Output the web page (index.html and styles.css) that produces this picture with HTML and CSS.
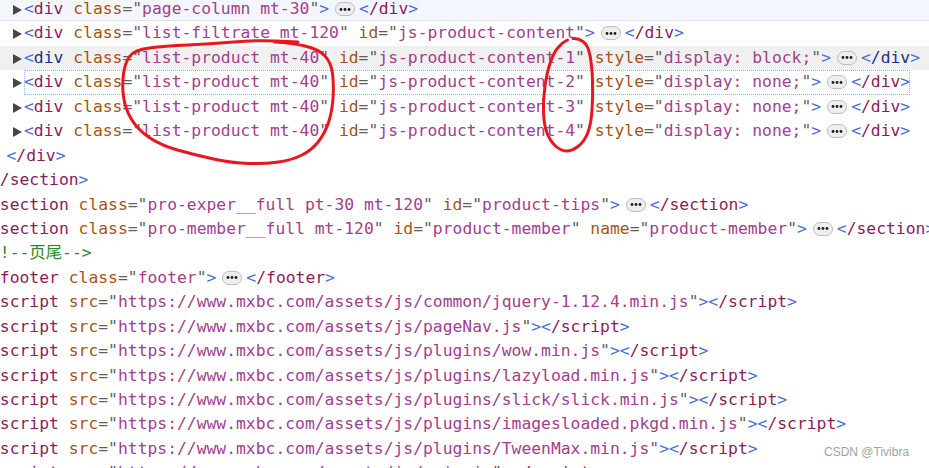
FILE: index.html
```html
<!DOCTYPE html>
<html lang="en">
<head>
<meta charset="utf-8">
<title>Elements</title>
<link rel="stylesheet" href="styles.css">
</head>
<body>
<div class="tree">
  <div class="r lv2 hov"><i class="tri"></i><span class="p">&lt;</span><span class="t">div</span> <span class="an">class</span><span class="eq">="</span><span class="av">page-column mt-30</span><span class="eq">"</span><span class="p">&gt;</span><span class="ell"><svg width="18" height="11" viewBox="0 0 18 11"><circle cx="5" cy="5.5" r="1.4"/><circle cx="9" cy="5.5" r="1.4"/><circle cx="13" cy="5.5" r="1.4"/></svg></span><span class="p">&lt;</span><span class="t">/div</span><span class="p">&gt;</span></div>
  <div class="r lv2"><i class="tri"></i><span class="p">&lt;</span><span class="t">div</span> <span class="an">class</span><span class="eq">="</span><span class="av">list-filtrate mt-120</span><span class="eq">"</span> <span class="an">id</span><span class="eq">="</span><span class="av">js-product-content</span><span class="eq">"</span><span class="p">&gt;</span><span class="ell"><svg width="18" height="11" viewBox="0 0 18 11"><circle cx="5" cy="5.5" r="1.4"/><circle cx="9" cy="5.5" r="1.4"/><circle cx="13" cy="5.5" r="1.4"/></svg></span><span class="p">&lt;</span><span class="t">/div</span><span class="p">&gt;</span></div>
  <div class="r lv2 sel"><i class="tri"></i><span class="p">&lt;</span><span class="t">div</span> <span class="an">class</span><span class="eq">="</span><span class="av">list-product mt-40</span><span class="eq">"</span> <span class="an">id</span><span class="eq">="</span><span class="av">js-product-content-1</span><span class="eq">"</span> <span class="an">style</span><span class="eq">="</span><span class="av">display: block;</span><span class="eq">"</span><span class="p">&gt;</span><span class="ell"><svg width="18" height="11" viewBox="0 0 18 11"><circle cx="5" cy="5.5" r="1.4"/><circle cx="9" cy="5.5" r="1.4"/><circle cx="13" cy="5.5" r="1.4"/></svg></span><span class="p">&lt;</span><span class="t">/div</span><span class="p">&gt;</span></div>
  <div class="r lv2"><i class="tri"></i><span class="focus"><span class="p">&lt;</span><span class="t">div</span> <span class="an">class</span><span class="eq">="</span><span class="av">list-product mt-40</span><span class="eq">"</span> <span class="an">id</span><span class="eq">="</span><span class="av">js-product-content-2</span><span class="eq">"</span> <span class="an">style</span><span class="eq">="</span><span class="av">display: none;</span><span class="eq">"</span><span class="p">&gt;</span><span class="ell"><svg width="18" height="11" viewBox="0 0 18 11"><circle cx="5" cy="5.5" r="1.4"/><circle cx="9" cy="5.5" r="1.4"/><circle cx="13" cy="5.5" r="1.4"/></svg></span><span class="p">&lt;</span><span class="t">/div</span><span class="p">&gt;</span></span></div>
  <div class="r lv2"><i class="tri"></i><span class="p">&lt;</span><span class="t">div</span> <span class="an">class</span><span class="eq">="</span><span class="av">list-product mt-40</span><span class="eq">"</span> <span class="an">id</span><span class="eq">="</span><span class="av">js-product-content-3</span><span class="eq">"</span> <span class="an">style</span><span class="eq">="</span><span class="av">display: none;</span><span class="eq">"</span><span class="p">&gt;</span><span class="ell"><svg width="18" height="11" viewBox="0 0 18 11"><circle cx="5" cy="5.5" r="1.4"/><circle cx="9" cy="5.5" r="1.4"/><circle cx="13" cy="5.5" r="1.4"/></svg></span><span class="p">&lt;</span><span class="t">/div</span><span class="p">&gt;</span></div>
  <div class="r lv2"><i class="tri"></i><span class="p">&lt;</span><span class="t">div</span> <span class="an">class</span><span class="eq">="</span><span class="av">list-product mt-40</span><span class="eq">"</span> <span class="an">id</span><span class="eq">="</span><span class="av">js-product-content-4</span><span class="eq">"</span> <span class="an">style</span><span class="eq">="</span><span class="av">display: none;</span><span class="eq">"</span><span class="p">&gt;</span><span class="ell"><svg width="18" height="11" viewBox="0 0 18 11"><circle cx="5" cy="5.5" r="1.4"/><circle cx="9" cy="5.5" r="1.4"/><circle cx="13" cy="5.5" r="1.4"/></svg></span><span class="p">&lt;</span><span class="t">/div</span><span class="p">&gt;</span></div>
  <div class="r lv1"><span class="p">&lt;</span><span class="t">/div</span><span class="p">&gt;</span></div>
  <div class="r lv0"><span class="p">&lt;</span><span class="t">/section</span><span class="p">&gt;</span></div>
  <div class="r lv0"><span class="p">&lt;</span><span class="t">section</span> <span class="an">class</span><span class="eq">="</span><span class="av">pro-exper__full pt-30 mt-120</span><span class="eq">"</span> <span class="an">id</span><span class="eq">="</span><span class="av">product-tips</span><span class="eq">"</span><span class="p">&gt;</span><span class="ell"><svg width="18" height="11" viewBox="0 0 18 11"><circle cx="5" cy="5.5" r="1.4"/><circle cx="9" cy="5.5" r="1.4"/><circle cx="13" cy="5.5" r="1.4"/></svg></span><span class="p">&lt;</span><span class="t">/section</span><span class="p">&gt;</span></div>
  <div class="r lv0"><span class="p">&lt;</span><span class="t">section</span> <span class="an">class</span><span class="eq">="</span><span class="av">pro-member__full mt-120</span><span class="eq">"</span> <span class="an">id</span><span class="eq">="</span><span class="av">product-member</span><span class="eq">"</span> <span class="an">name</span><span class="eq">="</span><span class="av">product-member</span><span class="eq">"</span><span class="p">&gt;</span><span class="ell"><svg width="18" height="11" viewBox="0 0 18 11"><circle cx="5" cy="5.5" r="1.4"/><circle cx="9" cy="5.5" r="1.4"/><circle cx="13" cy="5.5" r="1.4"/></svg></span><span class="p">&lt;</span><span class="t">/section</span><span class="p">&gt;</span></div>
  <div class="r lv0"><span class="cm">&lt;!--页尾--&gt;</span></div>
  <div class="r lv0"><span class="p">&lt;</span><span class="t">footer</span> <span class="an">class</span><span class="eq">="</span><span class="av">footer</span><span class="eq">"</span><span class="p">&gt;</span><span class="ell"><svg width="18" height="11" viewBox="0 0 18 11"><circle cx="5" cy="5.5" r="1.4"/><circle cx="9" cy="5.5" r="1.4"/><circle cx="13" cy="5.5" r="1.4"/></svg></span><span class="p">&lt;</span><span class="t">/footer</span><span class="p">&gt;</span></div>
  <div class="r lv0"><span class="p">&lt;</span><span class="t">script</span> <span class="an">src</span><span class="eq">="</span><span class="av">https://www.mxbc.com/assets/js/common/jquery-1.12.4.min.js</span><span class="eq">"</span><span class="p">&gt;&lt;</span><span class="t">/script</span><span class="p">&gt;</span></div>
  <div class="r lv0"><span class="p">&lt;</span><span class="t">script</span> <span class="an">src</span><span class="eq">="</span><span class="av">https://www.mxbc.com/assets/js/pageNav.js</span><span class="eq">"</span><span class="p">&gt;&lt;</span><span class="t">/script</span><span class="p">&gt;</span></div>
  <div class="r lv0"><span class="p">&lt;</span><span class="t">script</span> <span class="an">src</span><span class="eq">="</span><span class="av">https://www.mxbc.com/assets/js/plugins/wow.min.js</span><span class="eq">"</span><span class="p">&gt;&lt;</span><span class="t">/script</span><span class="p">&gt;</span></div>
  <div class="r lv0"><span class="p">&lt;</span><span class="t">script</span> <span class="an">src</span><span class="eq">="</span><span class="av">https://www.mxbc.com/assets/js/plugins/lazyload.min.js</span><span class="eq">"</span><span class="p">&gt;&lt;</span><span class="t">/script</span><span class="p">&gt;</span></div>
  <div class="r lv0"><span class="p">&lt;</span><span class="t">script</span> <span class="an">src</span><span class="eq">="</span><span class="av">https://www.mxbc.com/assets/js/plugins/slick/slick.min.js</span><span class="eq">"</span><span class="p">&gt;&lt;</span><span class="t">/script</span><span class="p">&gt;</span></div>
  <div class="r lv0"><span class="p">&lt;</span><span class="t">script</span> <span class="an">src</span><span class="eq">="</span><span class="av">https://www.mxbc.com/assets/js/plugins/imagesloaded.pkgd.min.js</span><span class="eq">"</span><span class="p">&gt;&lt;</span><span class="t">/script</span><span class="p">&gt;</span></div>
  <div class="r lv0"><span class="p">&lt;</span><span class="t">script</span> <span class="an">src</span><span class="eq">="</span><span class="av">https://www.mxbc.com/assets/js/plugins/TweenMax.min.js</span><span class="eq">"</span><span class="p">&gt;&lt;</span><span class="t">/script</span><span class="p">&gt;</span></div>
  <div class="r lv0"><span class="p">&lt;</span><span class="t">script</span> <span class="an">src</span><span class="eq">="</span><span class="av">https://www.mxbc.com/assets/js/main.js</span><span class="eq">"</span><span class="p">&gt;&lt;</span><span class="t">/script</span><span class="p">&gt;</span></div>
</div>

<svg class="marks" width="929" height="468" viewBox="0 0 929 468">
  <path d="M 274.5 42 Q 292 43 305 46 Q 318 49 324.5 55.5 Q 331 62 332.5 73.5 Q 334 85 333 98.5 Q 332 112 328.5 122.5 Q 325 133 318.5 141.5 Q 312 150 302 155 Q 292 160 278.5 162 Q 265 164 248.5 163.5 Q 232 163 213.5 159 Q 195 155 177.5 150 Q 160 145 148.5 137 Q 137 129 131 118.5 Q 125 108 123.5 96.5 Q 122 85 123.5 74 Q 125 63 129.5 56.5 Q 134 50 149.5 48 Q 165 46 187.5 45 Q 210 44 233.5 42 Q 257 40 276 41 L 298 42"/>
  <path d="M 573 38.5 Q 578 38 583 41.5 Q 588 45 590 55.5 Q 592 66 592.5 80.5 Q 593 95 592 110 Q 591 125 587.5 133.5 Q 584 142 578 146.5 Q 572 151 566.5 151 Q 561 151 555.5 146 Q 550 141 547 133 Q 544 125 543.5 112.5 Q 543 100 545 86 Q 547 72 550.5 62 Q 554 52 558.5 47 Q 563 42 567.5 40"/>
</svg>

<div class="wm">CSDN @Tivibra</div>
</body>
</html>
```

FILE: styles.css
```css
* { box-sizing: border-box; }

html, body {
  margin: 0;
  padding: 0;
  background: #ffffff;
  overflow: hidden;
}

body {
  width: 929px;
  height: 468px;
  position: relative;
}

.tree {
  margin: -3px 0 0 -10px;
  font-family: "DejaVu Sans Mono", "Noto Sans CJK SC", monospace;
  font-size: 16.35px;
  color: #222;
}

.r {
  height: 24.45px;
  line-height: 24.45px;
  white-space: nowrap;
}

.lv0 { padding-left: 0; }
.lv1 { padding-left: 16.5px; }
.lv2 { padding-left: 34px; }

.hov {
  background: #f3f7fd;
  box-shadow: inset 0 -1px 0 #dfe4ec;
}

.sel {
  background: #f0f0f0;
}

.sel .t { color: #1f2f86; }

.focus {
  display: inline-block;
  height: 24.45px;
  outline: 1px dotted #93b6e6;
  outline-offset: -1px;
}

.tri {
  display: inline-block;
  width: 0;
  height: 0;
  border-left: 9px solid #474747;
  border-top: 5.5px solid transparent;
  border-bottom: 5.5px solid transparent;
  margin-left: -11px;
  margin-right: 2px;
  vertical-align: -1px;
}

.p { color: #4d70d8; }
.t { color: #8b1b5b; }
.an { color: #a65318; }
.eq { color: #5e5e5e; }
.av { color: #a2408d; }
.cm { color: #2a8a2a; }

.ell {
  display: inline-block;
  width: 20px;
  height: 14px;
  margin: 0 4px 0 6px;
  border: 1px solid #bdbdbd;
  border-radius: 7px;
  background: #eeeeee;
  vertical-align: -2px;
  line-height: 0;
}

.ell svg {
  fill: #1e1e1e;
  display: block;
  margin-top: 0.5px;
}

.marks {
  position: absolute;
  left: 0;
  top: 0;
  pointer-events: none;
}

.marks path {
  fill: none;
  stroke: #e8161e;
  stroke-width: 3;
  stroke-linecap: round;
  stroke-linejoin: round;
}

.wm {
  position: absolute;
  left: 824px;
  top: 445px;
  font-family: "Liberation Sans", Arial, sans-serif;
  font-size: 12px;
  color: #a3a3a3;
  white-space: nowrap;
}
```
